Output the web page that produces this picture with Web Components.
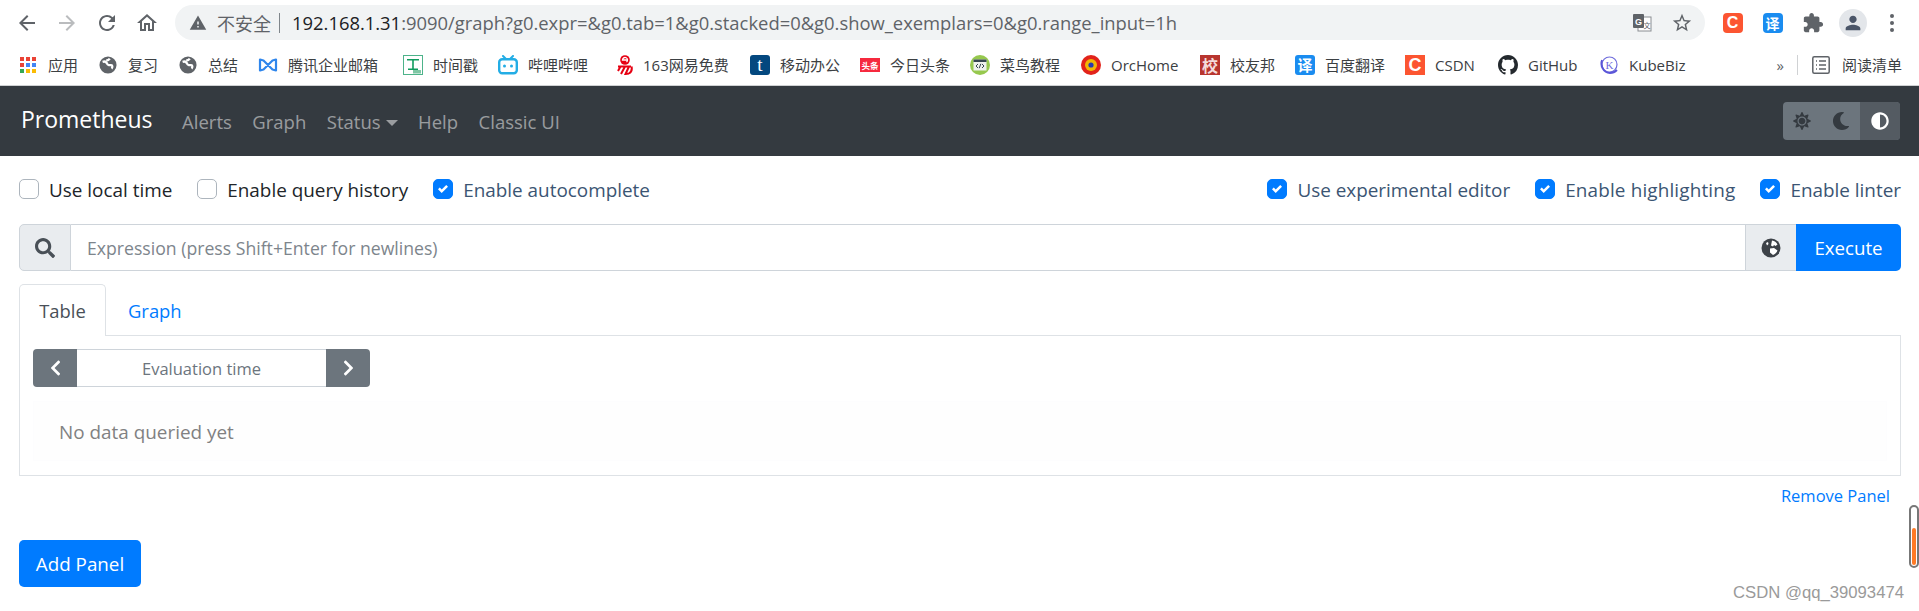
<!DOCTYPE html>
<html lang="zh">
<head>
<meta charset="utf-8">
<title>Prometheus Time Series Collection and Processing Server</title>
<style>
  html, body { margin: 0; height: 611px; overflow: hidden; background: #fff; }
  body { font-family: "Open Sans", "Noto Sans CJK SC", sans-serif; color: #212529; position: relative; }
</style>
</head>
<body>
  <browser-toolbar></browser-toolbar>
  <bookmark-bar></bookmark-bar>
  <prom-navbar></prom-navbar>
  <prom-page></prom-page>
  <page-marks></page-marks>

<script>
const svgIcon = (path, box, size, fill) =>
  `<svg viewBox="${box}" width="${size}" height="${size}" fill="${fill}" style="display:block"><path d="${path}"/></svg>`

const ICONS = {
  back: 'M20 11H7.83l5.59-5.59L12 4l-8 8 8 8 1.41-1.41L7.83 13H20v-2z',
  forward: 'M12 4l-1.41 1.41L16.17 11H4v2h12.17l-5.58 5.59L12 20l8-8z',
  reload: 'M17.65 6.35A7.958 7.958 0 0012 4c-4.42 0-7.99 3.58-7.99 8s3.57 8 7.99 8c3.73 0 6.84-2.55 7.73-6h-2.08A5.99 5.99 0 0112 18c-3.31 0-6-2.69-6-6s2.69-6 6-6c1.66 0 3.14.69 4.22 1.78L13 11h7V4l-2.35 2.35z',
  home: 'M12 5.69l5 4.5V18h-2v-6H9v6H7v-7.81l5-4.5M12 3L2 12h3v8h6v-6h2v6h6v-8h3L12 3z',
  warn: 'M1 21h22L12 2 1 21zm12-3h-2v-2h2v2zm0-4h-2v-4h2v4z',
  star: 'M22 9.24l-7.19-.62L12 2 9.19 8.63 2 9.24l5.46 4.73L5.82 21 12 17.27 18.18 21l-1.63-7.03L22 9.24zM12 15.4l-3.76 2.27 1-4.28-3.32-2.88 4.38-.38L12 6.1l1.71 4.04 4.38.38-3.32 2.88 1 4.28L12 15.4z',
  puzzle: 'M20.5 11H19V7c0-1.1-.9-2-2-2h-4V3.5C13 2.12 11.88 1 10.5 1S8 2.12 8 3.5V5H4c-1.1 0-1.99.9-1.99 2v3.8H3.5c1.49 0 2.7 1.21 2.7 2.7s-1.21 2.7-2.7 2.7H2V20c0 1.1.9 2 2 2h3.8v-1.5c0-1.49 1.21-2.7 2.7-2.7 1.49 0 2.7 1.21 2.7 2.7V22H17c1.1 0 2-.9 2-2v-4h1.5c1.38 0 2.5-1.12 2.5-2.5S21.88 11 20.5 11z',
  person: 'M12 12c2.21 0 4-1.79 4-4s-1.79-4-4-4-4 1.79-4 4 1.79 4 4 4zm0 2c-2.67 0-8 1.34-8 4v2h16v-2c0-2.66-5.33-4-8-4z',
  github: 'M8 0C3.58 0 0 3.58 0 8c0 3.54 2.29 6.53 5.47 7.59.4.07.55-.17.55-.38 0-.19-.01-.82-.01-1.49-2.01.37-2.53-.49-2.69-.94-.09-.23-.48-.94-.82-1.13-.28-.15-.68-.52-.01-.53.63-.01 1.08.58 1.23.82.72 1.21 1.87.87 2.33.66.07-.52.28-.87.51-1.07-1.78-.2-3.64-.89-3.64-3.95 0-.87.31-1.59.82-2.15-.08-.2-.36-1.02.08-2.12 0 0 .67-.21 2.2.82.64-.18 1.32-.27 2-.27.68 0 1.36.09 2 .27 1.53-1.04 2.2-.82 2.2-.82.44 1.1.16 1.92.08 2.12.51.56.82 1.27.82 2.15 0 3.07-1.87 3.75-3.65 3.95.29.25.54.73.54 1.48 0 1.07-.01 1.93-.01 2.2 0 .21.15.46.55.38A8.013 8.013 0 0016 8c0-4.42-3.58-8-8-8z',
  search: 'M505 442.7L405.3 343c-4.5-4.5-10.6-7-17-7H372c27.6-35.3 44-79.7 44-128C416 93.1 322.9 0 208 0S0 93.1 0 208s93.1 208 208 208c48.3 0 92.7-16.4 128-44v16.3c0 6.4 2.5 12.5 7 17l99.7 99.7c9.4 9.4 24.6 9.4 33.9 0l28.3-28.3c9.4-9.4 9.4-24.6.1-34zM208 336c-70.7 0-128-57.2-128-128 0-70.7 57.2-128 128-128 70.7 0 128 57.2 128 128 0 70.7-57.2 128-128 128z',
  sun: 'M256 160c-52.9 0-96 43.1-96 96s43.1 96 96 96 96-43.1 96-96-43.1-96-96-96zm246.4 80.5l-94.7-47.3 33.5-100.4c4.5-13.6-8.4-26.5-21.9-21.9l-100.4 33.5-47.4-94.8c-6.4-12.8-24.6-12.8-31 0l-47.3 94.7L92.7 70.8c-13.6-4.5-26.5 8.4-21.9 21.9l33.5 100.4-94.7 47.4c-12.8 6.4-12.8 24.6 0 31l94.7 47.3-33.5 100.5c-4.5 13.6 8.4 26.5 21.9 21.9l100.4-33.5 47.3 94.7c6.4 12.8 24.6 12.8 31 0l47.3-94.7 100.4 33.5c13.6 4.5 26.5-8.4 21.9-21.9l-33.5-100.4 94.7-47.3c13-6.5 13-24.7.2-31.1zm-155.9 106c-49.9 49.9-131.1 49.9-181 0-49.9-49.9-49.9-131.1 0-181 49.9-49.9 131.1-49.9 181 0 49.9 49.9 49.9 131.1 0 181z',
  moon: 'M283.211 512c78.962 0 151.079-35.925 198.857-94.792 7.068-8.708-.639-21.43-11.562-19.35-124.203 23.654-238.262-71.576-238.262-196.954 0-72.222 38.662-138.635 101.498-174.394 9.686-5.512 7.25-20.197-3.756-22.23A258.156 258.156 0 0 0 283.211 0c-141.309 0-256 114.511-256 256 0 141.309 114.511 256 256 256z',
  adjust: 'M8 256c0 136.966 111.033 248 248 248s248-111.034 248-248S392.966 8 256 8 8 119.033 8 256zm248 184V72c101.705 0 184 82.311 184 184 0 101.705-82.311 184-184 184z',
  chevronLeft: 'M34.52 239.03L228.87 44.69c9.37-9.37 24.57-9.37 33.94 0l22.67 22.67c9.36 9.36 9.37 24.52.04 33.9L131.49 256l154.02 154.75c9.34 9.38 9.32 24.54-.04 33.9l-22.67 22.67c-9.37 9.37-24.57 9.37-33.94 0L34.52 272.97c-9.37-9.37-9.37-24.57 0-33.94z',
  chevronRight: 'M285.476 272.971L91.132 467.314c-9.373 9.373-24.569 9.373-33.941 0l-22.667-22.667c-9.357-9.357-9.375-24.522-.04-33.901L188.505 256 34.484 101.255c-9.335-9.379-9.317-24.544.04-33.901l22.667-22.667c9.373-9.373 24.569-9.373 33.941 0L285.475 239.03c9.373 9.372 9.373 24.568.001 33.941z'
}

class BrowserToolbar extends HTMLElement {

  constructor () {
    super()
    this.shadow = this.attachShadow({ mode: 'open' })
  }

  connectedCallback () {
    this.render()
  }

  render () {
    this.shadow.innerHTML =
    /*html*/`
    <style>
      :host { display: flex; align-items: center; height: 45px; padding: 0 8px 0 7px; box-sizing: border-box; background: #fff; }
      .nav { width: 40px; display: flex; justify-content: center; flex: none; }
      .omni { flex: 1; height: 35px; margin-left: 8px; padding: 0 0 0 14px; display: flex; align-items: center; background: #f1f3f4; border-radius: 18px; font-size: 18.400px; color: #5f6368; white-space: nowrap; min-width: 0; }
      .warn { width: 18px; flex: none; margin-right: 10px; }
      .insecure { font-family: "Noto Sans CJK SC", sans-serif; font-size: 18px; }
      .bar { width: 1px; height: 20px; background: #80868b; margin: 0 12px 0 8px; }
      .url { flex: 1; }
      .url b { font-weight: 400; color: #202124; }
      .trans { width: 40px; flex: none; display: flex; justify-content: center; }
      .star { width: 40px; flex: none; display: flex; justify-content: center; margin-right: 3px; }
      .ext { flex: none; display: flex; justify-content: center; }
      .tile { width: 20px; height: 20px; border-radius: 4px; color: #fff; display: flex; align-items: center; justify-content: center; }
      .avatar { width: 28px; height: 28px; border-radius: 50%; background: #e3e6ea; display: flex; align-items: center; justify-content: center; }
      .dots { display: flex; flex-direction: column; gap: 3px; }
      .dots i { width: 4px; height: 4px; border-radius: 50%; background: #5f6368; }
    </style>
    <div class="nav">${svgIcon(ICONS.back, '0 0 24 24', 24, '#5f6368')}</div>
    <div class="nav">${svgIcon(ICONS.forward, '0 0 24 24', 24, '#babcbe')}</div>
    <div class="nav">${svgIcon(ICONS.reload, '0 0 24 24', 24, '#5f6368')}</div>
    <div class="nav">${svgIcon(ICONS.home, '0 0 24 24', 24, '#5f6368')}</div>
    <div class="omni">
      <span class="warn">${svgIcon(ICONS.warn, '0 0 24 24', 18, '#5f6368')}</span>
      <span class="insecure">不安全</span><span class="bar"></span>
      <span class="url"><b>192.168.1.31</b>:9090/graph?g0.expr=&amp;g0.tab=1&amp;g0.stacked=0&amp;g0.show_exemplars=0&amp;g0.range_input=1h</span>
      <span class="trans">
        <svg width="20" height="20" viewBox="0 0 20 20">
          <rect x="6" y="4" width="13" height="14" fill="#fff" stroke="#8a8d91"/>
          <rect x="1" y="1" width="11" height="14" rx="1" fill="#5f6368"/>
          <text x="6.5" y="11.5" font-size="9" font-weight="700" fill="#fff" text-anchor="middle" font-family="Liberation Sans">G</text>
          <text x="15" y="15" font-size="7" fill="#5f6368" text-anchor="middle" font-family="Noto Sans CJK SC">文</text>
        </svg>
      </span>
      <span class="star">${svgIcon(ICONS.star, '0 0 24 24', 22, '#5f6368')}</span>
    </div>
    <div class="ext" style="width:55px"><span class="tile" style="background:#fc5531;font:700 16px/1 'Liberation Sans'">C</span></div>
    <div class="ext" style="width:25px"><span class="tile" style="background:#1a8cf0;font:700 14px/1 'Noto Sans CJK SC'">译</span></div>
    <div class="ext" style="width:40px;margin-left:8px">${svgIcon(ICONS.puzzle, '0 0 24 24', 22, '#5f6368')}</div>
    <div class="ext" style="width:40px"><span class="avatar">${svgIcon(ICONS.person, '0 0 24 24', 22, '#4a5568')}</span></div>
    <div class="ext" style="width:38px"><span class="dots"><i></i><i></i><i></i></span></div>
    `
  }
}

class BookmarkBar extends HTMLElement {

  constructor () {
    super()
    this.shadow = this.attachShadow({ mode: 'open' })
    this.data = []
  }

  connectedCallback () {
    this.loadData()
    this.render()
  }

  loadData () {
    const worldIcon = `<svg viewBox="0 0 20 20" width="18" height="18"><circle cx="10" cy="10" r="9.500" fill="#5f6368"/><path d="M4 6.500c1.500-.5 3-.5 4 .5s1 2.500 2.500 3 3.500-.5 4 .5.500 2.500-.5 3.500M12 3c-1 1.500-2.500 2-4 2" stroke="#fff" stroke-width="2.600" fill="none"/></svg>`
    this.data = [
      { w: 79, iw: 16, gap: 12, label: '应用', icon: `<svg width="16" height="16" viewBox="0 0 16 16"><g fill="#ea4335"><rect width="4" height="4"/><rect x="6" width="4" height="4"/><rect x="12" width="4" height="4"/></g><rect y="6" width="4" height="4" fill="#ea4335"/><rect x="6" y="6" width="4" height="4" fill="#4285f4"/><rect x="12" y="6" width="4" height="4" fill="#4285f4"/><rect y="12" width="4" height="4" fill="#34a853"/><rect x="6" y="12" width="4" height="4" fill="#fbbc04"/><rect x="12" y="12" width="4" height="4" fill="#fbbc04"/></svg>` },
      { w: 80, iw: 18, gap: 11, label: '复习', icon: worldIcon },
      { w: 79, iw: 18, gap: 11, label: '总结', icon: worldIcon },
      { w: 145, label: '腾讯企业邮箱', icon: `<svg width="20" height="20" viewBox="0 0 20 20" fill="none" stroke="#2f86ec" stroke-width="2.200" stroke-linejoin="round"><path d="M2 4.500v11l3.500-1 9-9 3.500-1v11l-3.500-1-9-9z"/></svg>` },
      { w: 95, label: '时间戳', icon: `<svg width="20" height="20" viewBox="0 0 20 20"><rect x=".5" y=".5" width="19" height="19" fill="#fff" stroke="#4db38a"/><path d="M4 4h12v1.600h-5.200v8H15V15H5v-1.400h4.200v-8H4z" fill="#109b5e"/><rect x="10" y="15" width="8" height="3.500" fill="#7fc7a5"/></svg>` },
      { w: 118, label: '哔哩哔哩', icon: `<svg width="20" height="20" viewBox="0 0 20 20"><path d="M5 1l3 3M15 1l-3 3" stroke="#23ade5" stroke-width="2" stroke-linecap="round"/><rect x="1.200" y="4.200" width="17.600" height="14" rx="3" fill="#fff" stroke="#23ade5" stroke-width="2.400"/><circle cx="6.500" cy="11" r="1.500" fill="#23ade5"/><circle cx="13.500" cy="11" r="1.500" fill="#23ade5"/></svg>` },
      { w: 134, iw: 18, gap: 9, label: '163网易免费', icon: `<svg width="18" height="20" viewBox="0 0 18 20"><circle cx="9" cy="5" r="4.800" fill="#e60012"/><path d="M11.500 5h-5a2.500 2.500 0 1 1 4 2" fill="none" stroke="#fff" stroke-width="1.300"/><path d="M2 11.500h13M4.500 11.500 2 16M9 11.500 5 19M13 11.500 9.500 19l3.500-.5M15.500 11.500c.8 3-.2 5.500-2.500 7" fill="none" stroke="#e60012" stroke-width="2"/></svg>` },
      { w: 110, label: '移动办公', icon: `<span style="display:flex;align-items:center;justify-content:center;width:20px;height:20px;border-radius:3px;background:#03487f;color:#fff;font:400 19px/1 'Liberation Serif'">t</span>` },
      { w: 110, label: '今日头条', icon: `<span style="display:block;width:20px;height:14px;background:#f6293e;color:#fff;font:700 8.500px/14px 'Noto Sans CJK SC';text-align:center;white-space:nowrap">头条</span>` },
      { w: 111, label: '菜鸟教程', icon: `<svg width="20" height="20" viewBox="0 0 20 20"><circle cx="10" cy="10" r="10" fill="#96c84e"/><rect x="3.500" y="4.500" width="13" height="11" fill="#eef1ec"/><rect x="3.500" y="4.500" width="13" height="2.500" fill="#36474f"/><path d="M8 9l-2 2 2 2M12 9l2 2-2 2M10.800 8.800 9.200 13.200" stroke="#36474f" fill="none"/></svg>` },
      { w: 119, label: 'OrcHome', icon: `<svg width="20" height="20" viewBox="0 0 20 20"><circle cx="10" cy="10" r="10" fill="#e2231a"/><circle cx="10" cy="10" r="6" fill="#f2b705"/><circle cx="10" cy="10" r="2.600" fill="#2a3ab0"/></svg>` },
      { w: 95, label: '校友邦', icon: `<span style="display:flex;align-items:center;justify-content:center;width:20px;height:20px;background:#b8352f;color:#f4dcdc;font:700 16px/1 'Noto Sans CJK SC'">校</span>` },
      { w: 110, label: '百度翻译', icon: `<span style="display:flex;align-items:center;justify-content:center;width:20px;height:20px;border-radius:3px;background:#1a8cf0;color:#fff;font:700 15px/1 'Noto Sans CJK SC'">译</span>` },
      { w: 93, label: 'CSDN', icon: `<span style="display:flex;align-items:center;justify-content:center;width:20px;height:20px;background:#fc5531;color:#fff;font:700 18px/1 'Liberation Sans'">C</span>` },
      { w: 101, label: 'GitHub', icon: svgIcon(ICONS.github, '0 0 16 16', 20, '#24292e') },
      { w: 0, label: 'KubeBiz', icon: `<svg width="20" height="20" viewBox="0 0 20 20"><circle cx="10.500" cy="9.500" r="7.500" fill="#fff" stroke="#6f6cdc" stroke-width="1.200"/><path d="M3 5C1 10 4 18 11 18c3 0 5-1 7-3" fill="none" stroke="#5a55d8" stroke-width="1.800"/><text x="10.500" y="13.500" font-size="11" text-anchor="middle" fill="#6f6cdc" font-family="Liberation Serif">K</text></svg>` }
    ]
  }

  render () {
    this.shadow.innerHTML =
    /*html*/`
    <style>
      :host { display: flex; align-items: center; height: 41px; padding: 0 17px 1px 20px; box-sizing: border-box; background: #fff; border-bottom: 1px solid #cfd1d3; font-family: "Open Sans", "Noto Sans CJK SC", sans-serif; font-size: 15px; color: #3c4043; white-space: nowrap; }
      .item { display: flex; align-items: center; flex: none; }
      .ico { width: 20px; height: 20px; margin-right: 10px; display: flex; align-items: center; justify-content: center; flex: none; }
      .more { margin-left: auto; display: flex; align-items: center; }
      .chev { font-size: 15px; margin-right: 13px; color: #5f6368; }
      .sep { width: 1px; height: 20px; background: #d0d2d4; margin-right: 14px; }
      .list { width: 18px; height: 18px; margin-right: 12px; }
    </style>
    <div id="items" style="display:flex;align-items:center"></div>
    <div class="more">
      <span class="chev">»</span>
      <span class="sep"></span>
      <svg class="list" viewBox="0 0 18 18" fill="none" stroke="#5f6368" stroke-width="1.500"><rect x=".8" y=".8" width="16.400" height="16.400" rx="1.500"/><path d="M7 5h7M7 9h7M7 13h7M4 5h1M4 9h1M4 13h1"/></svg>
      <span>阅读清单</span>
    </div>
    `

    const items = this.shadow.querySelector('#items')
    this.data.forEach(bookmark => {
      const item = document.createElement('div')
      item.className = 'item'
      if (bookmark.w) item.style.width = bookmark.w + 'px'
      item.innerHTML = `<span class="ico">${bookmark.icon}</span><span>${bookmark.label}</span>`
      const ico = item.querySelector('.ico')
      if (bookmark.iw) ico.style.width = bookmark.iw + 'px'
      if (bookmark.gap) ico.style.marginRight = bookmark.gap + 'px'
      items.appendChild(item)
    })
  }
}

class PromNavbar extends HTMLElement {

  constructor () {
    super()
    this.shadow = this.attachShadow({ mode: 'open' })
  }

  connectedCallback () {
    this.render()
  }

  render () {
    this.shadow.innerHTML =
    /*html*/`
    <style>
      :host { display: flex; align-items: center; height: 70px; padding: 0 19px 0 21px; box-sizing: border-box; background: #343a40; font-size: 18.500px; }
      .brand { color: #fff; font-size: 23px; margin-right: 29.500px; line-height: 1; margin-top: -4px; }
      nav { display: flex; gap: 20.500px; flex: 1; padding-top: 1px; }
      nav a { color: rgba(255,255,255,.5); text-decoration: none; }
      .caret { display: inline-block; margin-left: 5px; vertical-align: 3px; border-top: 6px solid; border-left: 6px solid transparent; border-right: 6px solid transparent; }
    </style>
    <span class="brand">Prometheus</span>
    <nav>
      <a>Alerts</a>
      <a>Graph</a>
      <a>Status<span class="caret"></span></a>
      <a>Help</a>
      <a>Classic UI</a>
    </nav>
    <theme-toggle></theme-toggle>
    `
  }
}

class ThemeToggle extends HTMLElement {

  constructor () {
    super()
    this.shadow = this.attachShadow({ mode: 'open' })
  }

  connectedCallback () {
    this.render()
  }

  render () {
    this.shadow.innerHTML =
    /*html*/`
    <style>
      :host { display: flex; height: 38px; width: 117px; border-radius: 4px; overflow: hidden; background: #6c757d; }
      span { display: flex; align-items: center; justify-content: center; width: 39px; }
      span.first { width: 38px; }
      span.on { background: #545b62; width: 40px; }
    </style>
    <span class="first">${svgIcon(ICONS.sun, '0 0 512 512', 18, '#343a40')}</span>
    <span>${svgIcon(ICONS.moon, '0 0 512 512', 18, '#343a40')}</span>
    <span class="on">${svgIcon(ICONS.adjust, '0 0 512 512', 18, '#fff')}</span>
    `
  }
}

class OptionCheck extends HTMLElement {

  constructor () {
    super()
    this.shadow = this.attachShadow({ mode: 'open' })
  }

  connectedCallback () {
    this.render()
  }

  render () {
    this.shadow.innerHTML =
    /*html*/`
    <style>
      :host { display: inline-flex; align-items: center; gap: 10px; font-size: 18.900px; line-height: 30px; white-space: nowrap; color: #212529; }
      :host([checked]) { color: #3b5573; }
      .box { width: 20px; height: 20px; box-sizing: border-box; border: 1px solid #adb5bd; border-radius: 5px; background: #fff; display: flex; align-items: center; justify-content: center; }
      :host([checked]) .box { background: #007bff; border-color: #007bff; }
      .text { padding-top: 1px; }
      svg { display: none; }
      :host([checked]) svg { display: block; }
    </style>
    <span class="box"><svg width="10" height="10" viewBox="0 0 8 8"><path fill="#fff" d="M6.564.75l-3.59 3.612-1.538-1.55L0 4.26l2.974 2.99L8 2.193z"/></svg></span>
    <span class="text"><slot></slot></span>
    `
  }
}

class ExpressionBar extends HTMLElement {

  constructor () {
    super()
    this.shadow = this.attachShadow({ mode: 'open' })
  }

  connectedCallback () {
    this.render()
  }

  render () {
    this.shadow.innerHTML =
    /*html*/`
    <style>
      :host { display: flex; height: 47px; font-size: 18.700px; }
      .addon { display: flex; align-items: center; justify-content: center; background: #e9ecef; border: 1px solid #ced4da; box-sizing: border-box; width: 52px; flex: none; }
      .left { border-radius: 5px 0 0 5px; }
      .right { border-left: 1px solid #ced4da; border-right: 0; width: 51px; }
      .input { flex: 1; border: 1px solid #ced4da; border-left: 0; border-right: 0; display: flex; align-items: center; padding-left: 16px; color: #7d858c; font-size: 17.650px; }
      .run { width: 105px; flex: none; background: #007bff; color: #fff; display: flex; align-items: center; justify-content: center; border-radius: 0 5px 5px 0; }
    </style>
    <span class="addon left">${svgIcon(ICONS.search, '0 0 512 512', 20, '#495057')}</span>
    <span class="input">Expression (press Shift+Enter for newlines)</span>
    <span class="addon right">
      <svg width="20" height="20" viewBox="0 0 20 20"><circle cx="10" cy="10" r="9.500" fill="#3d4248"/><path d="M11 2.500c2.500.3 4.500 1.800 5.500 4l-2 1.500-1.500-1-1 1.500-2-1 .5-2.500zM5 5l2-1 .5 2-1.500 1.500zM9 10.500l4-.5 3.500 2.500c-.8 2.200-2.500 3.800-4.500 4.500l-3-2.500z" fill="#fff"/></svg>
    </span>
    <span class="run">Execute</span>
    `
  }
}

class EvalTime extends HTMLElement {

  constructor () {
    super()
    this.shadow = this.attachShadow({ mode: 'open' })
  }

  connectedCallback () {
    this.render()
  }

  render () {
    this.shadow.innerHTML =
    /*html*/`
    <style>
      :host { display: flex; width: 337px; height: 38px; font-size: 16.500px; color: #6c757d; }
      .btn { width: 44px; flex: none; background: #6c757d; display: flex; align-items: center; justify-content: center; }
      .prev { border-radius: 4px 0 0 4px; }
      .next { border-radius: 0 4px 4px 0; }
      .time { flex: 1; border: 1px solid #ced4da; border-left: 0; border-right: 0; display: flex; align-items: center; justify-content: center; }
    </style>
    <span class="btn prev"><svg width="11" height="18" viewBox="0 0 320 512" fill="#fff"><path d="${ICONS.chevronLeft}"/></svg></span>
    <span class="time">Evaluation time</span>
    <span class="btn next"><svg width="11" height="18" viewBox="0 0 320 512" fill="#fff"><path d="${ICONS.chevronRight}"/></svg></span>
    `
  }
}

class QueryPanel extends HTMLElement {

  constructor () {
    super()
    this.shadow = this.attachShadow({ mode: 'open' })
  }

  connectedCallback () {
    this.render()
  }

  render () {
    this.shadow.innerHTML =
    /*html*/`
    <style>
      :host { display: block; font-size: 18.400px; }
      .tabs { display: flex; margin-top: 13px; height: 51px; }
      .tab { box-sizing: border-box; height: 52px; padding: 0 21px; display: flex; align-items: center; color: #007bff; position: relative; z-index: 1; }
      .tab.active { width: 87px; padding: 0; justify-content: center; color: #495057; background: #fff; border: 1px solid #dee2e6; border-bottom: 0; border-radius: 5px 5px 0 0; }
      .tab.link { padding-left: 22px; }
      .body { border: 1px solid #dee2e6; border-top: 1px solid #dee2e6; padding: 13px 13px 14px; height: 141px; box-sizing: border-box; }
      .alert { margin-top: 14px; height: 60px; box-sizing: border-box; padding: 1px 0 0 25px; display: flex; align-items: center; background: #fefefe; border: 1px solid #fdfdfe; color: #818182; font-size: 18.900px; }
      .remove { display: flex; justify-content: flex-end; align-items: center; height: 39px; padding-right: 11px; color: #007bff; font-size: 16.500px; }
    </style>
    <div class="tabs">
      <span class="tab active">Table</span>
      <span class="tab link">Graph</span>
    </div>
    <div class="body">
      <eval-time></eval-time>
      <div class="alert">No data queried yet</div>
    </div>
    <div class="remove">Remove Panel</div>
    `
  }
}

class PromPage extends HTMLElement {

  constructor () {
    super()
    this.shadow = this.attachShadow({ mode: 'open' })
  }

  connectedCallback () {
    this.render()
  }

  render () {
    this.shadow.innerHTML =
    /*html*/`
    <style>
      :host { display: block; padding: 18px 18px 0 19px; }
      .options { display: flex; gap: 25px; height: 30px; margin-bottom: 20px; }
      .spacer { flex: 1; }
      .wide { letter-spacing: .15px; }
      .add { display: flex; align-items: center; justify-content: center; width: 122px; height: 47px; margin-top: 25px; background: #007bff; color: #fff; border-radius: 5px; font-size: 18.800px; }
    </style>
    <div class="options">
      <option-check>Use local time</option-check>
      <option-check>Enable query history</option-check>
      <option-check checked>Enable autocomplete</option-check>
      <span class="spacer"></span>
      <option-check checked>Use experimental editor</option-check>
      <option-check checked class="wide">Enable highlighting</option-check>
      <option-check checked>Enable linter</option-check>
    </div>
    <expression-bar></expression-bar>
    <query-panel></query-panel>
    <div class="add">Add Panel</div>
    `
  }
}

// things lying over the page: the little scroll widget and the site watermark
class PageMarks extends HTMLElement {

  constructor () {
    super()
    this.shadow = this.attachShadow({ mode: 'open' })
  }

  connectedCallback () {
    this.render()
  }

  render () {
    this.shadow.innerHTML =
    /*html*/`
    <style>
      :host { display: block; }
      .scroll { position: absolute; left: 1909px; top: 505px; width: 10px; height: 63px; box-sizing: border-box; border: 2.500px solid #777; border-radius: 5px; background: #fff; }
      .scroll i { position: absolute; left: .5px; bottom: 1px; width: 4px; height: 37px; background: #ff7a26; border-radius: 2px; }
      .mark { position: absolute; right: 15px; top: 583px; font: 16.700px/20px "Liberation Sans", sans-serif; color: #9a9a9a; }
    </style>
    <div class="scroll"><i></i></div>
    <div class="mark">CSDN @qq_39093474</div>
    `
  }
}

customElements.define('browser-toolbar', BrowserToolbar)
customElements.define('bookmark-bar', BookmarkBar)
customElements.define('theme-toggle', ThemeToggle)
customElements.define('prom-navbar', PromNavbar)
customElements.define('option-check', OptionCheck)
customElements.define('expression-bar', ExpressionBar)
customElements.define('eval-time', EvalTime)
customElements.define('query-panel', QueryPanel)
customElements.define('prom-page', PromPage)
customElements.define('page-marks', PageMarks)
</script>
</body>
</html>
